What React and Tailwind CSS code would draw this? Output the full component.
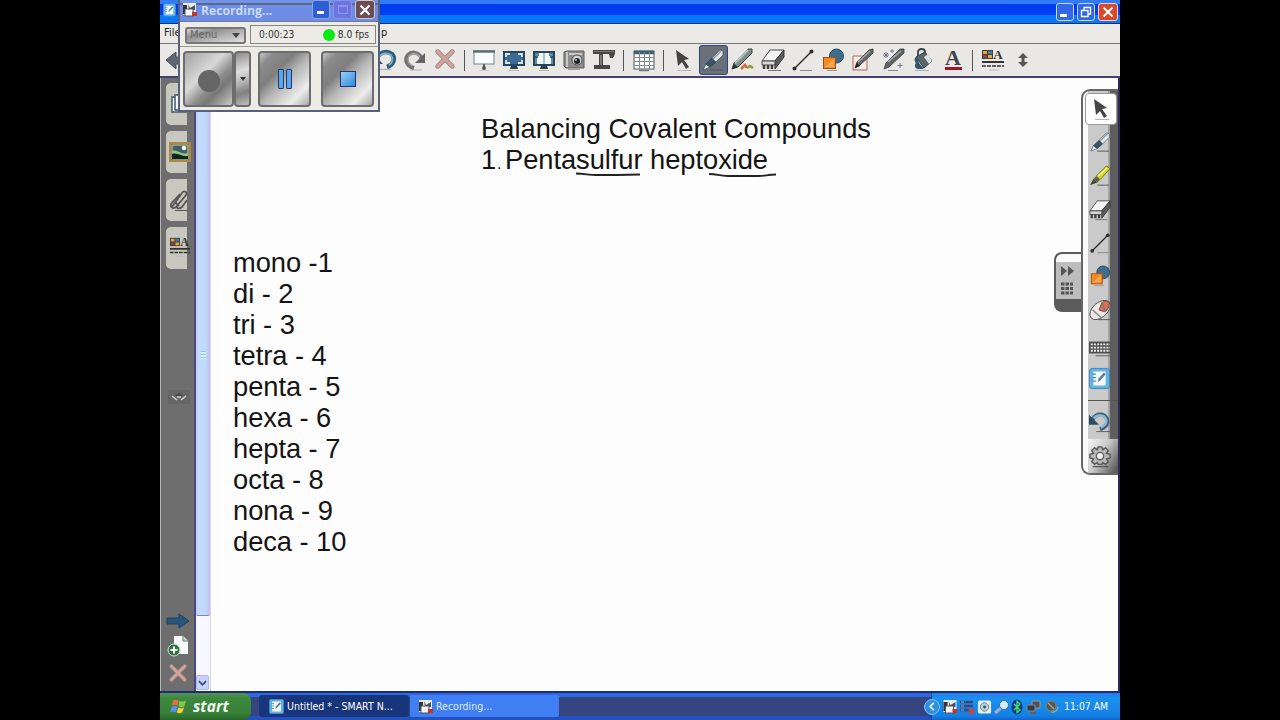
import React from "react";

const prefixes = [
  "mono -1",
  "di - 2",
  "tri - 3",
  "tetra - 4",
  "penta - 5",
  "hexa - 6",
  "hepta - 7",
  "octa - 8",
  "nona - 9",
  "deca - 10",
];

function Svg({ box = "0 0 24 24", className = "w-6 h-6", children }) {
  return (
    <svg viewBox={box} className={`${className} shrink-0`} fill="none">
      {children}
    </svg>
  );
}

/* ---------- Icons ---------- */

const BackIcon = () => (
  <Svg>
    <path d="M1 12l10-8v5h12v7H11v5z" fill="#5d6873" stroke="#444c55" />
  </Svg>
);

const UndoIcon = () => (
  <Svg>
    <path d="M3 21.500h15" stroke="#b9b9b9" strokeWidth="1.5" />
    <path d="M4 11C6 4 14 2 19 6c4 5 1 11-5 13" stroke="#2f5f7b" strokeWidth="4.5" />
    <path d="M5 10C8 5 14 4 18 7c3 4 1 8-2 10" stroke="#7fb2c7" strokeWidth="1.8" />
    <path d="M0 6v10h10z" fill="#2b4f68" />
  </Svg>
);

const RedoIcon = () => (
  <Svg>
    <path d="M7 22h12" stroke="#c4c4c4" strokeWidth="1.5" />
    <path d="M19 11C16 4 9 3 5 7c-4 5-1 11 6 13" stroke="#727272" strokeWidth="4" />
    <path d="M17 9C13 4 8 5 6 8c-2 4-1 7 3 10" stroke="#a5a5a5" strokeWidth="1.3" />
    <path d="M22 5v10H12z" fill="#646464" />
  </Svg>
);

const DeleteIcon = ({ className }) => (
  <Svg className={className}>
    <path d="M4 4l16 16M20 4L4 20" stroke="#a67c73" strokeWidth="5.2" strokeLinecap="round" />
    <path d="M4 4l16 16M20 4L4 20" stroke="#cba69c" strokeWidth="3.4" strokeLinecap="round" />
  </Svg>
);

const ScreenIcon = () => (
  <Svg>
    <path d="M7 22.5h10" stroke="#c8c8c8" />
    <path d="M12 16v5" stroke="#555" strokeWidth="2" />
    <circle cx="12" cy="20" r="2" fill="#555" />
    <rect x="2" y="3" width="20" height="13" fill="#fafdfd" stroke="#6d8588" />
    <path d="M1 3.500h22" stroke="#5d6c70" strokeWidth="2.4" />
  </Svg>
);

const FullScreenIcon = () => (
  <Svg>
    <path d="M9 18h6l1 3H8z" fill="#2b3d48" />
    <rect x="1" y="3" width="22" height="15" fill="#28475b" />
    <rect x="3" y="5" width="18" height="11" fill="#3b6c93" />
    <path d="M4 9V6h4M16 6h4v3M4 12v3h4M16 15h4v-3" stroke="#d8ebf4" strokeWidth="1.8" />
    <path d="M7 22.5h10" stroke="#bbb" />
  </Svg>
);

const DualPageIcon = () => (
  <Svg>
    <path d="M9 18h6l1 3H8z" fill="#2b3d48" />
    <rect x="1" y="3" width="22" height="15" fill="#28475b" />
    <rect x="3" y="5" width="18" height="11" fill="#5d8aa5" />
    <path d="M5 8h2V5h4.500v11H5zM19 8h-2V5h-4.500v11H19z" fill="#f2f7f9" />
    <path d="M3 9h3M21 9h-3" stroke="#274658" strokeWidth="1.5" />
    <path d="M7 22.5h10" stroke="#bbb" />
  </Svg>
);

const CameraIcon = () => (
  <Svg>
    <path d="M2 4l3-1h17v17H4l-2-2z" fill="#8e8e8c" stroke="#5c5c5a" />
    <path d="M5 4v15" stroke="#ddd" strokeWidth="1.5" />
    <path d="M7 6h13" stroke="#c8c8c8" strokeWidth="2" />
    <circle cx="15" cy="12" r="5" fill="#d5d5d2" stroke="#4d4d4d" />
    <circle cx="15" cy="13" r="3" fill="#1c2126" />
    <circle cx="14" cy="12" r="1" fill="#bed0db" />
    <path d="M6 21.5h12" stroke="#9d9d9d" />
  </Svg>
);

const DocCameraIcon = () => (
  <Svg>
    <path d="M1 2h22v4l-2 4h-3l-1-4h-6v11h7v4H2v-4h5V6H1z" fill="#474747" />
    <path d="M9 7v10" stroke="#8d8d8d" strokeWidth="1.5" />
    <path d="M2 3.500h20" stroke="#777" />
  </Svg>
);

const TableIcon = () => (
  <Svg>
    <rect x="2" y="3" width="20" height="18" fill="#fff" stroke="#46525c" />
    <path d="M2 4.5h20" stroke="#3e5e72" strokeWidth="3.5" />
    <path d="M2 9.500h20M2 13.500h20M2 17.500h20M7.500 4v17M12.500 4v17M17.500 4v17" stroke="#7f8b93" />
    <path d="M7 22.5h10" stroke="#777" strokeWidth="1.500" />
  </Svg>
);

const PointerIcon = ({ className }) => (
  <Svg className={className}>
    <path d="M6 22.500h14" stroke="#b5b5b5" />
    <path d="M5 2l13 9-5 1 5 7-3 2-4-7-4 4z" fill="#444" />
  </Svg>
);

const PenIcon = ({ className }) => (
  <Svg className={className}>
    <path d="M9 22h13" stroke="#555" />
    <path d="M2 22l3-6 4 3z" fill="#f2f2f2" stroke="#334b59" strokeWidth=".7" />
    <path d="M5 16l6-6 4 4-6 5z" fill="#34556a" stroke="#243d4c" strokeWidth=".7" />
    <path d="M11 10l8-8 3 1v4l-7 7z" fill="#e2e7ea" stroke="#50636e" strokeWidth=".8" />
    <path d="M12 11l8-8" stroke="#8796a0" strokeWidth="1.4" />
  </Svg>
);

const CreativePenIcon = () => (
  <Svg>
    <path d="M1 21l2-6L17 1h4v4L7 19z" fill="#7d8b8b" stroke="#3d4848" />
    <path d="M4 15L17 2" stroke="#bac5c5" strokeWidth="2" />
    <path d="M1 21l2-5 4 3z" fill="#25332f" />
    <path d="M10 21l4-4 2 3" stroke="#d96a3b" strokeWidth="2.500" />
    <path d="M16 20l3-2 3 2" stroke="#8a9b3c" strokeWidth="2.500" />
  </Svg>
);

const EraserIcon = ({ className }) => (
  <Svg className={className}>
    <path d="M1 13L9 2h14l-9 11z" fill="#f4f4f4" stroke="#4b4b4b" />
    <path d="M14 13l9-11v7l-9 12z" fill="#5c5c5c" stroke="#393939" />
    <path d="M1 13h13v4H1z" fill="#d8d8d8" stroke="#484848" />
    <path d="M3 17v4M7 17v4M11 17v4" stroke="#3d3d3d" strokeWidth="2.500" />
    <path d="M7 22.5h13" stroke="#777" />
  </Svg>
);

const LineIcon = ({ className }) => (
  <Svg className={className}>
    <path d="M3 21L21 3" stroke="#2f2f2f" strokeWidth="1.500" />
    <circle cx="3.500" cy="20.500" r="2" fill="#2c2c2c" />
    <circle cx="20.500" cy="3.500" r="2" fill="#2c2c2c" />
    <path d="M9 22.5h12" stroke="#888" />
  </Svg>
);

const ShapesIcon = ({ className }) => (
  <Svg className={className}>
    <circle cx="15.500" cy="8" r="7" fill="#3f6d8e" stroke="#284b63" />
    <rect x="2.500" y="9.500" width="12" height="11" fill="#f58a25" stroke="#a94c12" />
    <path d="M4 19l9-8v8z" fill="#fba94e" />
    <path d="M6 22.5h10" stroke="#999" />
  </Svg>
);

const ShapePenIcon = () => (
  <Svg>
    <path d="M2 8h14v14H2z" fill="#f2ece7" stroke="#b0664c" />
    <path d="M4 20l2-6L18 2l4-1v4L9 17z" fill="#666" stroke="#444" />
    <path d="M7 14L19 3" stroke="#aaa" strokeWidth="1.500" />
    <path d="M4 20l2-5 3 3z" fill="#222" />
  </Svg>
);

const MagicPenIcon = () => (
  <Svg>
    <path d="M3 21l2-6L19 1h4v4L8 19z" fill="#5e6367" stroke="#3c3f41" strokeWidth=".8" />
    <path d="M7 14L20 3" stroke="#a5aaae" strokeWidth="1.500" />
    <path d="M5 4v6M2 7h6M3 5l4 4M7 5L3 9M11 1v4M9 3h4M19 15v5M16.500 17.500h5" stroke="#6f7891" />
    <path d="M7 22.500h10" stroke="#888" />
  </Svg>
);

const FillIcon = () => (
  <Svg>
    <path d="M7 10V4c0-4 7-4 7 0v7" stroke="#3a4146" strokeWidth="1.800" />
    <path d="M5 9l9-5 7 9-8 7z" fill="#59666d" stroke="#333c41" />
    <path d="M13 9l4-3 4 7-3 3z" fill="#d9dfe1" />
    <path d="M6 8c-3 2-3 5-1 7-2 2-1 6 2 6h6l-5-6z" fill="#35566a" />
    <path d="M4 22.500h14" stroke="#aaa" />
  </Svg>
);

const FontIcon = () => (
  <div className="w-[22px] h-6 flex flex-col items-center">
    <span className="h-[19px] text-[22px] leading-[20px] font-bold text-[#3e4448] font-['Liberation_Serif',serif]">A</span>
    <div className="w-[17px] h-[3px] bg-[#a0132e]" />
  </div>
);

const PropertiesIcon = ({ className }) => (
  <Svg className={className}>
    <rect x="1" y="2" width="11" height="9" fill="#3a4248" />
    <path d="M2 3h4v3H2zM7 7h4v3H7z" fill="#e9a62d" />
    <path d="M2 7h4v3H2z" fill="#9c3d36" />
    <path d="M7 3h4v3H7z" fill="#4977a0" />
    <text x="17" y="11" textAnchor="middle" fontSize="13" fontWeight="bold" fill="#333" fontFamily="Liberation Serif, serif">A</text>
    <path d="M1 14h22" stroke="#333" strokeWidth="2" />
    <path d="M1 18h22" stroke="#333" strokeWidth="1.500" strokeDasharray="4 1" />
    <path d="M8 22h10" stroke="#bbb" />
  </Svg>
);

const MoveIcon = () => (
  <Svg>
    <path d="M12 5l5 5h-3.500v4H17l-5 5-5-5h3.500v-4H7z" fill="#555" />
  </Svg>
);

const HighlighterIcon = ({ className }) => (
  <Svg className={className}>
    <path d="M9 22h13" stroke="#555" />
    <path d="M1 22l4-7 4 4z" fill="#454638" />
    <path d="M5 15l3-3 4 4-3 3z" fill="#5d6041" />
    <path d="M8 12L19 1l4 3-11 12z" fill="#d6db24" stroke="#666b20" />
    <path d="M10 12L20 3" stroke="#f0f48a" strokeWidth="1.500" />
  </Svg>
);

const DiscIcon = ({ className }) => (
  <Svg className={className}>
    <path d="M10 22.500h13" stroke="#555" />
    <ellipse cx="12" cy="12" rx="13" ry="8" transform="rotate(-42 12 12)" fill="#ece9e6" stroke="#555" />
    <path d="M11 12L14 4c4-3 8-2 8 1 0 4-2 7-4 9z" fill="#d8705a" stroke="#7d3b2e" />
    <path d="M4 12l9 8M14 4l4 10M11 12l7 2" stroke="#777" strokeWidth="1.200" />
  </Svg>
);

const KeyboardIcon = ({ className }) => (
  <Svg className={className}>
    <rect x="0" y="5" width="24" height="13" fill="#505050" />
    <path d="M2 8h21M2 11.500h21M2 15h21" stroke="#eee" strokeWidth="2" strokeDasharray="2.200 1.200" />
    <path d="M7 20.500h16" stroke="#555" />
  </Svg>
);

const NotebookIcon = ({ className }) => (
  <Svg className={className}>
    <rect x="0.500" y="0.500" width="23" height="23" rx="3" fill="#65b1e1" stroke="#3984b8" />
    <path d="M5 4h14v16H5z" fill="#f3fafd" />
    <path d="M4 7h4M4 11h4M4 15h4" stroke="#528eb0" strokeWidth="1.500" />
    <path d="M10 16l1-4 6-7 2 2-6 7z" fill="#597c91" />
  </Svg>
);

const SideUndoIcon = ({ className }) => (
  <Svg className={className}>
    <path d="M8 22.500h15" stroke="#555" />
    <path d="M4 9C9 1 18 3 20 10c1 5-3 8-8 10" stroke="#3d6078" strokeWidth="4.500" />
    <path d="M5 8C10 3 17 4 19 10c0 4-2 6-6 8" stroke="#8fb8d6" strokeWidth="2.800" />
    <path d="M0 4v11h11z" fill="#2f4b5e" />
  </Svg>
);

const GearIcon = ({ className }) => (
  <Svg className={className}>
    <path d="M10 1h4l1 3 3-2 3 3-2 3 4 1v4l-4 1 2 3-3 3-3-2-1 2h-4l-1-2-3 2-3-3 2-3-4-1V9l4-1-2-3 3-3 3 2z" fill="#b9b9b9" stroke="#555" strokeWidth="1.500" />
    <circle cx="12" cy="11" r="4" fill="#efefef" stroke="#606060" strokeWidth="1.500" />
    <path d="M4 22.500h17" stroke="#555" strokeWidth="1.500" />
  </Svg>
);

const ImageIcon = () => (
  <Svg box="0 0 22 20" className="w-[22px] h-5">
    <rect x="1" y="1" width="20" height="18" fill="#2e4f47" stroke="#b08647" strokeWidth="2" />
    <rect x="3" y="3" width="16" height="14" fill="#435d65" stroke="#e7d5a2" />
    <path d="M3 9c6-2 8 4 16 2v6H3z" fill="#8fc58c" />
    <path d="M3 12c6-2 9 3 16 2v3H3z" fill="#10261c" />
    <circle cx="15" cy="6" r="2.300" fill="#f4fafa" />
  </Svg>
);

const ClipIcon = () => (
  <Svg box="0 0 22 24" className="w-[22px] h-6">
    <path d="M3 19L13 5c2-3 6-1 4 2L8 18c-2 3-7 3-6-2L11 6M8 18c-1 3 3 3 5 1l5-7M6 14l4 4" stroke="#565656" strokeWidth="1.800" />
    <path d="M6 22.500h13" stroke="#555" />
  </Svg>
);

const RecorderIcon = ({ className = "w-4 h-4" }) => (
  <Svg box="0 0 16 16" className={className}>
    <rect x="1" y="1" width="13" height="12" fill="#e9edf0" />
    <path d="M1 3h4v9H1z" fill="#333" />
    <path d="M6 2l2 4 5-3v5H7z" fill="#47535f" />
    <rect x="3" y="7" width="8" height="7" fill="#f5f5f5" stroke="#555" />
    <path d="M10 10h5v4h-5z" fill="#c8322c" />
  </Svg>
);

const WindowsLogo = () => (
  <Svg box="0 0 18 18" className="w-[17px] h-[17px]">
    <path d="M3 3c2-2 4-1 6 0L8 8C6 7 4 7 2 8z" fill="#ef6a3a" />
    <path d="M10 3c2 1 4 1 7 0l-2 6c-2 1-4 1-6 0z" fill="#83c84b" />
    <path d="M2 9c2-1 4-1 6 0l-2 6c-2-1-4-1-6 0z" fill="#5a8ff0" />
    <path d="M9 10c2 1 4 1 6 0l-2 5c-2 2-4 1-6 0z" fill="#f8cb3c" />
  </Svg>
);

/* ---------- Window chrome ---------- */

function TitleBar() {
  return (
    <div className="h-6 shrink-0 flex items-start pt-[3px] pl-[3px] pr-[2px] border-b border-[#17306b] bg-[linear-gradient(#2f7cf5_0px,#2f7cf5_4px,#003cf0_4px,#003ff2_15px,#0878fa_15px,#0878fa_23px)]">
      <NotebookIcon className="w-[13px] h-[14px]" />
      <div className="ml-auto flex gap-[3px]">
        <div className="w-[18px] h-[18px] rounded-[3px] border border-[#c5d7fa] bg-[#3268e6] flex items-end pb-[3px] pl-[3px]">
          <div className="w-[7px] h-[3px] bg-white" />
        </div>
        <div className="w-[18px] h-[18px] rounded-[3px] border border-[#c5d7fa] bg-[#3268e6] flex items-center justify-center">
          <Svg box="0 0 12 12" className="w-3 h-3">
            <path d="M4 4V1.500h6.500V8H8M1.500 4.500H8V10.500H1.500z" stroke="#fff" strokeWidth="1.300" />
          </Svg>
        </div>
        <div className="w-5 h-[18px] rounded-[3px] border border-[#f2d1c6] bg-[#d9482a] flex items-center justify-center">
          <Svg box="0 0 12 12" className="w-3 h-3">
            <path d="M1.500 1.500l9 9M10.500 1.500l-9 9" stroke="#fff" strokeWidth="2" />
          </Svg>
        </div>
      </div>
    </div>
  );
}

function MenuBar() {
  return (
    <div className="h-[19px] shrink-0 flex items-center bg-[#ebeae6] pl-1 text-[11px] text-[#222] font-['DejaVu_Sans_Condensed','DejaVu_Sans',sans-serif]">
      <span className="w-[217px]">File</span>
      {/* tail of "Help", the rest sits behind the recorder */}
      <span>p</span>
    </div>
  );
}

function Tool({ children, active }) {
  return (
    <div className="w-[30px] h-[30px] flex items-center justify-center shrink-0">
      {active ? (
        <div className="w-[29px] h-[30px] rounded-[3px] border border-[#2a4783] bg-[#68707a] flex items-center justify-center">
          {children}
        </div>
      ) : (
        children
      )}
    </div>
  );
}

function Divider() {
  return (
    <div className="w-[9.500px] flex justify-center shrink-0">
      <div className="w-px h-[21px] bg-[#555]" />
    </div>
  );
}

function Toolbar() {
  return (
    <div className="h-[35px] shrink-0 flex items-center bg-[#e9e8e5] border-t border-[#777] border-b-2 border-b-[#45406f]">
      <div className="w-[209.500px] shrink-0 pl-[5px]">
        <BackIcon />
      </div>
      <Tool><UndoIcon /></Tool>
      <Tool><RedoIcon /></Tool>
      <Tool><DeleteIcon className="w-[22px] h-[22px] -mt-0.5" /></Tool>
      <Divider />
      <Tool><ScreenIcon /></Tool>
      <Tool><FullScreenIcon /></Tool>
      <Tool><DualPageIcon /></Tool>
      <Tool><CameraIcon /></Tool>
      <Tool><DocCameraIcon /></Tool>
      <Divider />
      <Tool><TableIcon /></Tool>
      <Divider />
      <Tool><PointerIcon /></Tool>
      <Tool active><PenIcon /></Tool>
      <Tool><CreativePenIcon /></Tool>
      <Tool><EraserIcon /></Tool>
      <Tool><LineIcon /></Tool>
      <Tool><ShapesIcon /></Tool>
      <Tool><ShapePenIcon /></Tool>
      <Tool><MagicPenIcon /></Tool>
      <Tool><FillIcon /></Tool>
      <Tool><FontIcon /></Tool>
      <Divider />
      <Tool><PropertiesIcon /></Tool>
      <Tool><MoveIcon /></Tool>
    </div>
  );
}

/* ---------- Left side ---------- */

function SideTab({ children }) {
  return (
    <div className="w-[21px] h-[42px] shrink-0 rounded-l-[5px] bg-[#c9c8bf] flex items-center pl-[3px]">
      {children}
    </div>
  );
}

function Sidebar() {
  return (
    <div className="w-[34px] shrink-0 bg-[#6e6e6e] border-l border-[#b5b5b5] flex flex-col pl-[5px] pt-[5px]">
      <div className="flex flex-col gap-[6px]">
        <SideTab>
          <Svg box="0 0 20 20" className="w-5 h-5">
            <path d="M3 3h14v15H3z" fill="#fff" stroke="#3b5866" strokeWidth="1.500" />
            <path d="M6 1h13v15H6z" fill="#f5f8fa" stroke="#3b5866" strokeWidth="1.500" />
          </Svg>
        </SideTab>
        <SideTab><ImageIcon /></SideTab>
        <SideTab><ClipIcon /></SideTab>
        <SideTab><PropertiesIcon className="w-[22px] h-6 -mt-0.5" /></SideTab>
      </div>
      <div className="mt-[121px] ml-[2px] w-[22px] h-[14px] bg-[#656565] flex items-center justify-center">
        <Svg box="0 0 20 12" className="w-5 h-3">
          <path d="M6 5l4-3 4 3z" fill="#444" />
          <path d="M3 5l5 4M17 5l-5 4M8 6h4" stroke="#d5d5d5" strokeWidth="1.500" />
        </Svg>
      </div>
      <div className="mt-auto flex flex-col items-center gap-[6px] w-[24px] pb-2">
        <Svg box="0 0 24 18" className="w-6 h-[18px] mb-[-1px]">
          <path d="M1 6h12V2l10 7-10 7v-4H1z" fill="#28567c" stroke="#203f58" />
        </Svg>
        <Svg box="0 0 22 22" className="w-[22px] h-[22px]">
          <path d="M7 1h9l5 5v13H7z" fill="#f8faf9" />
          <path d="M16 1v5h5" fill="#ccd4d2" stroke="#707c78" />
          <circle cx="7" cy="15" r="6" fill="#327245" stroke="#d2e0d3" />
          <path d="M7 11.500v7M3.500 15h7" stroke="#fff" strokeWidth="2" />
        </Svg>
        <DeleteIcon className="w-5 h-5" />
      </div>
    </div>
  );
}

function ScrollBar() {
  return (
    <div className="w-[17px] shrink-0 bg-[#f7f7fd] border-l-2 border-[#4c4880] border-r border-r-[#d8d8e2] flex flex-col">
      <div className="h-[538px] bg-[linear-gradient(90deg,#c9c8fb_0px,#c0dcfd_3px,#c0dcfd_9px,#c7c2f4_13px)] border-b border-[#7b84ae] rounded-b-[2px] flex items-center justify-center">
        <div className="w-[5px] h-[8px] mt-4 bg-[repeating-linear-gradient(#8ac9d8_0px,#8ac9d8_1px,#d9f2fa_1px,#d9f2fa_3px)]" />
      </div>
      <div className="mt-auto h-[15px] mb-px w-[13px] rounded-[2px] border border-[#a9baf0] bg-[#c6d4fc] flex items-center justify-center">
        <Svg box="0 0 10 8" className="w-[9px] h-2">
          <path d="M1 2l4 4 4-4" stroke="#3c4a78" strokeWidth="2" />
        </Svg>
      </div>
    </div>
  );
}

/* ---------- Canvas ---------- */

function Canvas() {
  return (
    <div className="flex-1 relative bg-[#fdfdfd] border-r-2 border-[#2c2a55] pl-[22px] text-[27.300px] leading-[31px] text-[#141414] font-['Liberation_Sans',Arial,sans-serif]">
      <div className="pl-[248px] pt-[35px] whitespace-nowrap">
        <div>Balancing Covalent Compounds</div>
        <div className="flex items-baseline">
          <span className="w-[16px]">1</span>
          <span className="w-[8px] text-[16px]">.</span>
          <span className="tracking-[-0.05px]">Pentasulfur heptoxide</span>
        </div>
        {/* ink strokes under "sulfur" and "oxide" */}
        <Svg box="0 0 300 8" className="w-[300px] h-2 -mt-[7px]">
          <path d="M95 1.500c8 0 13 1.500 20 1.500s20 0 44-.5" stroke="#222" strokeWidth="1.800" />
          <path d="M228 2c9 0 9 2 19 2h31c7 0 8-1.500 17-1.500" stroke="#222" strokeWidth="1.800" />
        </Svg>
      </div>
      <ul className="mt-[67px] tracking-[-0.05px]">
        {prefixes.map((p) => (
          <li key={p}>{p}</li>
        ))}
      </ul>
      <FloatingTools />
    </div>
  );
}

function FloatingTools() {
  return (
    <div className="absolute right-0 top-[11px] flex items-start">
      <div className="mt-[163px] w-[27px] h-[60px] rounded-l-[8px] border-2 border-r-0 border-[#5c5c5c] bg-[#5c5c5c]">
        <div className="h-[45px] rounded-tl-[6px] bg-[linear-gradient(#fafafa_0px,#fafafa_8px,#bdbdbd_8px)] flex flex-col items-center pr-[4px] pt-[11px] gap-[4px]">
          <Svg box="0 0 14 12" className="w-[14px] h-3">
            <path d="M1 1l6 5-6 5zM8 1l6 5-6 5z" fill="#555" />
          </Svg>
          <Svg box="0 0 14 14" className="w-[14px] h-[14px]">
            <path d="M1 3h12M1 7.500h12M1 12h12" stroke="#555" strokeWidth="3" strokeDasharray="3.500 1" />
          </Svg>
        </div>
      </div>
      <div className="w-[37px] h-[386px] overflow-hidden rounded-l-[9px] border-2 border-r-0 border-[#666] bg-[linear-gradient(90deg,#fbfbfb_0px,#fbfbfb_5px,#cacaca_5px,#cacaca_25px,#a2a2a2_25px,#a2a2a2_27px,#5e5e5e_27px)] flex flex-col pl-[6px]">
        <div className="-ml-[4px] mt-[2px] w-8 h-8 shrink-0 rounded-[4px] border border-[#999] bg-white flex items-center justify-center">
          <PointerIcon className="w-6 h-6" />
        </div>
        <PenIcon className="w-[22px] h-6 mt-[5px]" />
        <HighlighterIcon className="w-[22px] h-6 mt-[10px]" />
        <EraserIcon className="w-[22px] h-[22px] mt-[11px]" />
        <LineIcon className="w-[22px] h-[22px] mt-[11px]" />
        <ShapesIcon className="w-[22px] h-[24px] mt-[10px]" />
        <DiscIcon className="w-[22px] h-6 mt-[10px]" />
        <KeyboardIcon className="w-[22px] h-[22px] mt-[15px]" />
        <NotebookIcon className="w-[21px] h-[23px] mt-[8px]" />
        <div className="h-px w-[30px] -ml-px shrink-0 mt-[10px] bg-[#555]" />
        <SideUndoIcon className="w-[22px] h-[24px] mt-[9px]" />
        <div className="w-[30px] -ml-px pl-px h-[35px] mt-[5px] shrink-0 bg-[linear-gradient(120deg,#f2f2f2,#c9c9c9_45%,#5e5e5e_90%)] flex items-center">
          <GearIcon className="w-[22px] h-[24px]" />
        </div>
      </div>
    </div>
  );
}

/* ---------- Screen recorder ---------- */

function RecorderButton({ children, className }) {
  return (
    <div className={`${className} h-[56px] rounded-[4px] border-2 border-[#6d6d6d] flex items-center justify-center`}>
      {children}
    </div>
  );
}

function Recorder() {
  return (
    <div className="absolute left-[18px] top-0 w-[202px] h-[112px] bg-[#ecebe6] border-2 border-t-0 border-[#59607c] flex flex-col text-[11px] font-['DejaVu_Sans_Condensed','DejaVu_Sans',sans-serif]">
      <div className="h-[22px] shrink-0 flex items-start pl-[2px] pr-[3px] border-b border-[#7078a0] bg-[linear-gradient(#7192e6_0px,#7192e6_3px,#5b6785_3px,#5b6785_5px,#6c8de3_5px)]">
        <RecorderIcon className="w-4 h-4 mt-[2px]" />
        <span className="ml-[3px] mt-[1px] text-[12.200px] leading-[19px] font-bold text-[#cbd9fb] font-['Open_Sans',sans-serif]">Recording...</span>
        <div className="ml-auto flex gap-[3px]">
          <div className="w-[18px] h-[19px] rounded-[3px] border border-[#8ca6ee] bg-[#2e5ed2] flex items-end pl-1 pb-[4px]">
            <div className="w-[7px] h-[3px] bg-white" />
          </div>
          <div className="w-[19px] h-[19px] rounded-[3px] border border-[#8793e8] bg-[#6b75e0] flex items-center justify-center">
            <div className="w-[10px] h-[9px] border border-t-2 border-[#8e91ee]" />
          </div>
          <div className="w-5 h-[19px] rounded-[3px] border border-[#cfc6cf] bg-[#6d4d54] flex items-center justify-center">
            <Svg box="0 0 12 12" className="w-3 h-3">
              <path d="M1.500 1.500l9 9M10.500 1.500l-9 9" stroke="#fff" strokeWidth="2.200" />
            </Svg>
          </div>
        </div>
      </div>
      <div className="h-[25px] shrink-0 flex items-center pl-[5px] gap-[4px] border-b border-[#9b9b98]">
        <div className="w-[61px] h-[17px] mt-[2px] rounded-[3px] border-2 border-[#777] bg-[linear-gradient(165deg,#d5d5d5_0%,#8f8f8f_30%,#b5b5b5_60%,#e0e0e0_100%)] flex items-center pl-[3px] text-[#666]">
          <span>Menu</span>
          <Svg box="0 0 8 5" className="w-2 h-[5px] ml-auto mr-1">
            <path d="M0 0h8L4 5z" fill="#444" />
          </Svg>
        </div>
        <div className="w-[126px] h-[19px] mt-px border border-[#858583] flex items-center pl-2 text-[10.200px] text-[#333] whitespace-nowrap">
          <span>0:00:23</span>
          <span className="ml-auto w-3 h-3 rounded-full bg-[#0bea14]" />
          <span className="ml-[3px] mr-[6px]">8.0 fps</span>
        </div>
      </div>
      <div className="flex items-start pt-[4px] pl-[3px]">
        <RecorderButton className="w-[51px] bg-[linear-gradient(135deg,#a5a5a5_0%,#c4c4c4_25%,#d8d8d8_40%,#8e8e8e_60%,#777_72%,#c8c8c8_100%)]">
          <div className="w-[22px] h-[22px] mt-1 rounded-full bg-[#666]" />
        </RecorderButton>
        <RecorderButton className="w-[17px] bg-[linear-gradient(160deg,#8a8a8a_0%,#dedede_35%,#b5b5b5_55%,#808080_75%,#c0c0c0_100%)]">
          <Svg box="0 0 6 4" className="w-[6px] h-1">
            <path d="M0 0h6L3 4z" fill="#333" />
          </Svg>
        </RecorderButton>
        <RecorderButton className="w-[53px] ml-[7px] bg-[linear-gradient(135deg,#c9c9c9_0%,#8b8b8b_14%,#7f7f7f_35%,#b5b5b5_52%,#ededed_80%,#a9a9a9_100%)]">
          <div className="flex gap-[2px]">
            <div className="w-[6px] h-5 rounded-[1px] border border-[#1b3c6b] bg-[#5ba5ee]" />
            <div className="w-[6px] h-5 rounded-[1px] border border-[#1b3c6b] bg-[#5ba5ee]" />
          </div>
        </RecorderButton>
        <RecorderButton className="w-[53px] ml-[10px] bg-[linear-gradient(135deg,#c9c9c9_0%,#8b8b8b_14%,#7f7f7f_35%,#b5b5b5_52%,#ededed_80%,#a9a9a9_100%)]">
          <div className="w-4 h-4 border border-[#1b3c6b] bg-[linear-gradient(135deg,#9bd0fb,#2f86dd)]" />
        </RecorderButton>
      </div>
    </div>
  );
}

/* ---------- Taskbar ---------- */

function Tray() {
  return (
    <div className="w-[189px] flex items-center bg-[linear-gradient(#2a78ee_0px,#1a91ee_5px,#1480e4_23px,#1263c9)] border-l border-[#174c9c] text-white">
      <div className="w-4 h-4 -ml-2 shrink-0 rounded-full border border-[#86c6f4] bg-[#2e8fe4] flex items-center justify-center">
        <Svg box="0 0 8 10" className="w-2 h-[9px]">
          <path d="M6 1L2 5l4 4" stroke="#fff" strokeWidth="1.800" />
        </Svg>
      </div>
      <RecorderIcon className="w-[17px] h-4 ml-[2px]" />
      <Svg box="0 0 16 16" className="w-4 h-4">
        <path d="M1 3h13M1 7h13M1 11h10" stroke="#394879" strokeWidth="2.500" />
        <path d="M2 3h3M2 7h3M2 11h3" stroke="#99b4e0" />
        <path d="M10 10l5 5M15 10l-5 5" stroke="#df3d36" strokeWidth="2" />
      </Svg>
      <Svg box="0 0 16 16" className="w-[15px] h-4 ml-[2px]">
        <rect x="1" y="1" width="14" height="14" rx="2" fill="#e7eef0" />
        <circle cx="8" cy="8" r="4.500" fill="#bad2d8" stroke="#688591" />
        <circle cx="8" cy="8" r="1.500" fill="#35505e" />
      </Svg>
      <Svg box="0 0 16 16" className="w-4 h-4 ml-[2px]">
        <path d="M1 14l6-5" stroke="#a8aebe" strokeWidth="3" />
        <circle cx="10" cy="6" r="4.500" fill="#d5eefb" stroke="#386cae" />
      </Svg>
      <Svg box="0 0 12 16" className="w-3 h-4 ml-[1px]">
        <ellipse cx="6" cy="8" rx="5.500" ry="7.500" fill="#093887" />
        <path d="M3 5l6 6-3 2.500v-11L9 5l-6 6" stroke="#4de06e" strokeWidth="1.300" />
      </Svg>
      <Svg box="0 0 16 16" className="w-4 h-4 ml-[3px]">
        <path d="M6 2h8v7H6z" fill="#4e5257" stroke="#9a9c9a" />
        <path d="M1 6h8v6H1z" fill="#343b45" stroke="#858986" />
        <path d="M4 14h6" stroke="#675b55" strokeWidth="2" />
      </Svg>
      <Svg box="0 0 16 16" className="w-4 h-4 ml-[1px]">
        <circle cx="8" cy="7" r="5" fill="#55564c" stroke="#88887a" />
        <path d="M5 4l6 6M8 13c4 1 7-2 7-5" stroke="#a3a594" strokeWidth="1.300" />
      </Svg>
      <span className="ml-auto mr-[12px] text-[10.300px] whitespace-nowrap">11:07 AM</span>
    </div>
  );
}

function Taskbar() {
  return (
    <div className="h-[29px] shrink-0 flex border-t-2 border-[#1a2d78] bg-[linear-gradient(#2d67e2_0px,#2d67e2_4px,#34457f_4px,#34457f_23px,#2451bd_23px)] text-[10.500px] text-white font-['DejaVu_Sans_Condensed','DejaVu_Sans',sans-serif]">
      <div className="w-[91px] shrink-0 flex items-center pl-[10px] gap-[6px] rounded-r-[8px] bg-[linear-gradient(#5b8f56_0px,#3b8a3c_5px,#38803a_20px,#286429)]">
        <WindowsLogo />
        <span className="text-[15.500px] leading-none italic font-bold text-[#f2f6ee] font-['Open_Sans',sans-serif]">start</span>
      </div>
      <div className="ml-[8px] mt-[2px] mb-[3px] w-[150px] shrink-0 rounded-[3px] bg-[#17357b] flex items-center pl-[10px] pt-px gap-[3px]">
        <NotebookIcon className="w-[15px] h-[15px]" />
        <span className="whitespace-nowrap">Untitled * - SMART N...</span>
      </div>
      <div className="ml-px mt-[2px] mb-[3px] w-[149px] shrink-0 rounded-[2px] bg-[#3f7ff3] flex items-center pl-[8px] pt-px gap-[2px]">
        <RecorderIcon className="w-4 h-4" />
        <span className="text-[#dfeafe]">Recording...</span>
      </div>
      <div className="flex-1" />
      <Tray />
    </div>
  );
}

export default function App() {
  return (
    <div className="w-[1280px] h-[720px] bg-black flex justify-center overflow-hidden">
      <div className="relative w-[960px] h-[720px] flex flex-col overflow-hidden">
        <TitleBar />
        <MenuBar />
        <Toolbar />
        <div className="flex-1 min-h-0 flex">
          <Sidebar />
          <ScrollBar />
          <Canvas />
        </div>
        <Taskbar />
        <Recorder />
      </div>
    </div>
  );
}
